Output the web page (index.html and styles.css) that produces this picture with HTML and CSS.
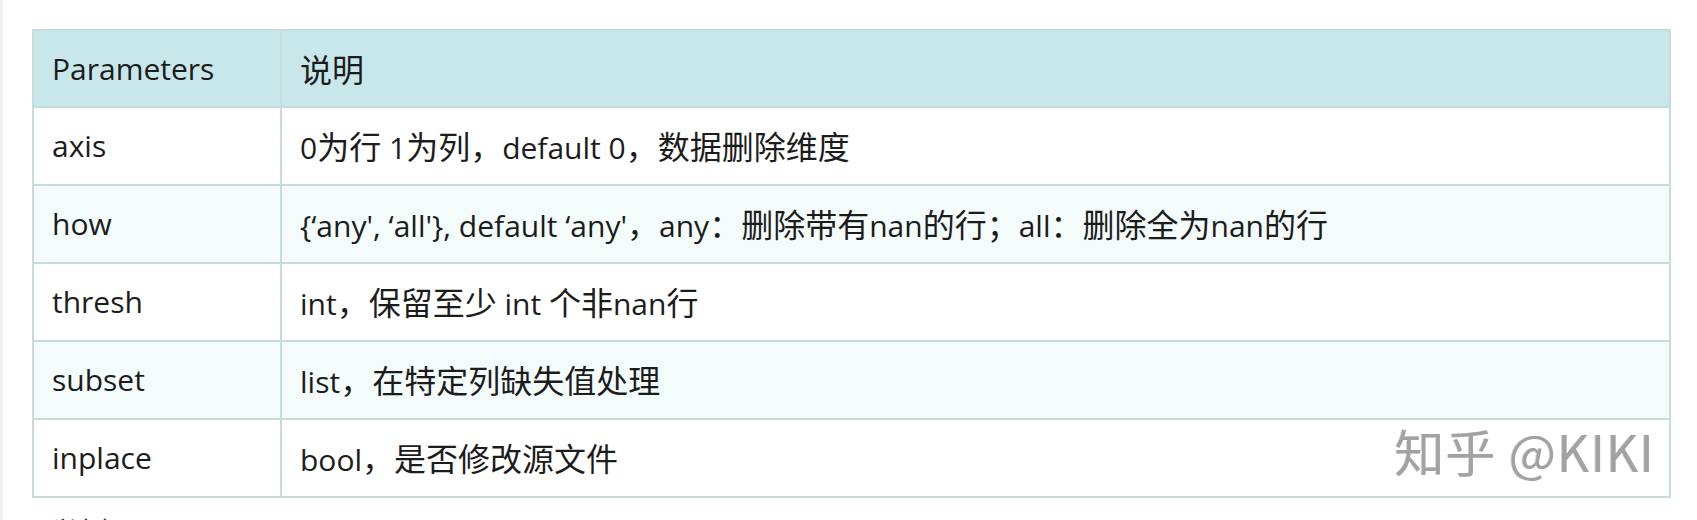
FILE: index.html
```html
<!DOCTYPE html>
<html lang="zh-CN">
<head>
<meta charset="utf-8">
<title>dropna parameters</title>
<link rel="stylesheet" href="styles.css">
</head>
<body>
<div class="page">
  <div class="table-wrap">
    <table class="params">
      <thead>
        <tr><th class="c1">Parameters</th><th><span class="zh">说明</span></th></tr>
      </thead>
      <tbody>
        <tr><td class="c1">axis</td><td>0<span class="zh">为行</span> 1<span class="zh">为列，</span>default 0<span class="zh">，数据删除维度</span></td></tr>
        <tr class="alt"><td class="c1">how</td><td>{‘any', ‘all'}, default ‘any'<span class="zh">，</span>any<span class="zh">：删除带有</span>nan<span class="zh">的行；</span>all<span class="zh">：删除全为</span>nan<span class="zh">的行</span></td></tr>
        <tr><td class="c1">thresh</td><td>int<span class="zh">，保留至少</span> int <span class="zh">个非</span>nan<span class="zh">行</span></td></tr>
        <tr class="alt"><td class="c1">subset</td><td>list<span class="zh">，在特定列缺失值处理</span></td></tr>
        <tr><td class="c1">inplace</td><td>bool<span class="zh">，是否修改源文件</span></td></tr>
      </tbody>
    </table>
    <div class="watermark">知乎 @KIKI</div>
  </div>
  <p class="next">举例</p>
</div>
</body>
</html>
```

FILE: styles.css
```css
html, body {
  margin: 0;
  padding: 0;
  background: #ffffff;
}
body {
  width: 1697px;
  height: 520px;
  overflow: hidden;
  font-family: "Open Sans", "Noto Sans CJK SC", sans-serif;
  color: #1c1c1c;
}
.page {
  height: 520px;
  overflow: hidden;
  box-sizing: border-box;
  padding: 29px 0 0 29px;
  border-left: 3px solid #f1f1f1;
}
.table-wrap {
  position: relative;
  width: 1639px;
}
.params {
  width: 1639px;
  border-collapse: collapse;
  table-layout: fixed;
  font-size: 30px;
}
.params th,
.params td {
  box-sizing: border-box;
  border: 2px solid #c6dcdb;
  height: 78px;
  padding: 0 0 0 18px;
  text-align: left;
  font-weight: normal;
  vertical-align: middle;
  white-space: nowrap;
  line-height: 1.2;
}
.params thead th {
  height: 77px;
  background: #c8e7ea;
}
.params .c1 {
  width: 248px;
}
.params tr.alt td {
  background: #f3fbfb;
}
.zh {
  font-family: "Noto Sans CJK SC", sans-serif;
  font-size: 32px;
}
.watermark {
  position: absolute;
  right: 16px;
  bottom: 23px;
  font-family: "Noto Sans CJK SC", "Open Sans", sans-serif;
  font-size: 50px;
  font-weight: 400;
  color: #a2a2a2;
  text-shadow: 2px 1px 0 rgba(255,255,255,0.9), -1px 0 0 rgba(170,170,170,0.5);
  letter-spacing: 1px;
  line-height: 1;
}
.next {
  margin: 16px 0 0 18px;
  font-family: "Noto Sans CJK SC", sans-serif;
  font-size: 29px;
  line-height: 1.2;
  color: #333;
}
```
